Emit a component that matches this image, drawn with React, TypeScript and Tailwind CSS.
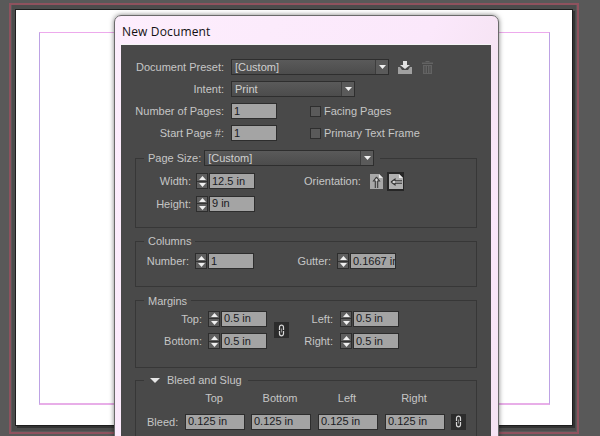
import React from 'react';

const Caret = ({ up }: { up?: boolean }) => (
  <svg width="7" height="4" viewBox="0 0 7 4" className={up ? 'rotate-180' : ''}>
    <path d="M0 0h7L3.5 4z" fill="#f0f0f0" />
  </svg>
);

const Select = ({ value, className }: { value: string; className: string }) => (
  <div className={`flex h-4 items-center border border-[#2e2e2e] bg-linear-to-b from-[#5a5a5a] to-[#4c4c4c] text-[#d0d0d0] ${className}`}>
    <span className="flex-1 pl-[3px] leading-none">{value}</span>
    <span className="flex h-full w-[13px] items-center justify-center border-l border-[#3d3d3d] bg-[#5a5a5a]">
      <Caret />
    </span>
  </div>
);

const Field = ({ value, className = 'w-[46px]' }: { value?: string; className?: string }) => (
  <div className={`flex h-4 items-center overflow-hidden whitespace-nowrap border border-[#2d2d2d] bg-[#a4a4a4] pl-[2px] leading-none text-[#1a1a22] ${className}`}>
    {value}
  </div>
);

const Stepper = () => (
  <div className="flex h-4 w-[12px] flex-col border border-[#2d2d2d] bg-[#5f5f5f]">
    <span className="flex flex-1 items-center justify-center border-b border-[#333]">
      <Caret up />
    </span>
    <span className="flex flex-1 items-center justify-center">
      <Caret />
    </span>
  </div>
);

const SpinField = ({ value, className }: { value: string; className?: string }) => (
  <div className="flex items-center gap-px">
    <Stepper />
    <Field value={value} className={className} />
  </div>
);

const Check = ({ label }: { label: string }) => (
  <div className="flex items-center gap-[3px]">
    <span className="h-[11px] w-[11px] border border-[#2e2e2e] bg-[#5a5a5a]" />
    <span>{label}</span>
  </div>
);

const LinkIcon = () => (
  <div className="flex h-4 w-[15px] items-center justify-center bg-[#2c2c2c]">
    <svg width="9" height="13" viewBox="0 0 9 13" fill="none" stroke="#d8d8d8" strokeWidth="1.2">
      <path d="M2.5 6V3.2a2 2 0 0 1 4 0V6" />
      <path d="M2.5 7v2.8a2 2 0 0 0 4 0V7" />
      <path d="M4.5 4.5v4" stroke="#8a8a8a" />
    </svg>
  </div>
);

const PortraitIcon = () => (
  <svg width="15" height="17" viewBox="0 0 15 17">
    <path d="M1 1h9l4 4v11H1z" fill="#a8a8a8" />
    <path d="M10 1l4 4h-4z" fill="#e8e8e8" />
    <path d="M7.5 4L4.5 8h1.8v7M7.5 4l3 4H8.700v7" fill="none" stroke="#3a3a3a" strokeWidth="1.1" />
    <circle cx="7.500" cy="7" r="1" fill="#e0e0e0" />
  </svg>
);

const LandscapeIcon = () => (
  <div className="flex h-[19px] w-[17px] items-center justify-center bg-[#262626]">
    <svg width="14" height="15" viewBox="0 0 14 15">
      <path d="M0 0h10l4 4v11H0z" fill="#b0b0b0" />
      <path d="M10 0l4 4h-4z" fill="#eeeeee" />
      <path d="M2 8l4-3v1.800h7M2 8l4 3V9.200h7" fill="none" stroke="#303030" strokeWidth="1.1" />
      <circle cx="5" cy="8" r="1" fill="#e0e0e0" />
    </svg>
  </div>
);

export default function App() {
  return (
    <div className="relative h-[436px] w-[600px] overflow-hidden bg-[#595959] font-['Liberation_Sans',sans-serif] text-[11px] text-[#c6c6c6]">
      {/* bleed line, page and margin guides */}
      <div className="absolute left-[12px] top-[5px] h-[426px] w-[564px] bg-[#4c4c4c]" />
      <div className="absolute left-[9px] top-[3px] h-[431px] w-[570px] border-2 border-[#8f525e]" />
      <div className="absolute left-[15px] top-[9px] h-[417px] w-[558px] border border-[#1e1e1e] bg-white shadow-[2px_2px_0_#333]" />
      <div className="absolute left-[39px] top-[32px] h-[373px] w-[511px] border-x border-x-[#bda2e4] border-b-2 border-t border-b-[#e8aee8] border-t-[#edaaec]" />

      {/* dialog */}
      <div className="absolute left-[114px] top-[15px] h-[440px] w-[385px] rounded-t-[7px] border border-[#6a6a6a] bg-[linear-gradient(115deg,#fdeefd_0%,#fbe8fb_55%,#f6e4f4_68%,#fbe7fb_80%,#f5e3f3_100%)] shadow-[0_0_5px_rgba(0,0,0,0.5)]">
        <div className="h-[28px] pl-[7px] pt-[6px] font-['Open_Sans',sans-serif] text-[12px] leading-[20px] tracking-[0.15px] text-[#111]">New Document</div>

        <div className="ml-[6px] h-[420px] w-[370px] border-t border-[#f5f5f5] bg-[#494949] pl-[14px] pt-[14px]">
          {/* preset rows */}
          <div className="flex flex-col gap-[6px] whitespace-nowrap">
            <div className="flex h-4 items-center">
              <span className="w-[89px] text-right">Document Preset:</span>
              <Select value="[Custom]" className="ml-[7px] w-[158px]" />
              <svg width="16" height="13" viewBox="0 0 16 13" className="ml-[8px]">
                <path d="M6 0h4v4h3l-5 4-5-4h3z" fill="#e0e0e0" />
                <path d="M1 6h2l2 3h6l2-3h2v7H1z" fill="#a0a0a0" />
              </svg>
              <svg width="11" height="13" viewBox="0 0 11 13" className="ml-[9px]" fill="#636363">
                <path d="M0 1.500h11v1.500H0zM3.500 0h4v1h-4zM1 4h9v9H1z" />
                <path d="M3 5v7M5.500 5v7M8 5v7" stroke="#494949" />
              </svg>
            </div>
            <div className="flex h-4 items-center">
              <span className="w-[89px] text-right">Intent:</span>
              <Select value="Print" className="ml-[7px] w-[124px]" />
            </div>
            <div className="flex h-4 items-center">
              <span className="w-[89px] text-right">Number of Pages:</span>
              <Field value="1" className="ml-[7px] w-[46px]" />
              <div className="ml-[33px]"><Check label="Facing Pages" /></div>
            </div>
            <div className="flex h-4 items-center">
              <span className="w-[89px] text-right">Start Page #:</span>
              <Field value="1" className="ml-[7px] w-[46px]" />
              <div className="ml-[33px]"><Check label="Primary Text Frame" /></div>
            </div>
          </div>

          {/* page size */}
          <fieldset className="mt-[9px] w-[342px] border border-[#373737] pb-[15px] pt-[7px]">
            <legend className="ml-[8px] flex h-4 items-center pl-[4px] pr-[6px]">
              <span>Page Size:</span>
              <Select value="[Custom]" className="ml-[3px] w-[170px]" />
            </legend>
            <div className="flex">
              <div className="flex flex-col gap-[6px]">
                <div className="flex items-center">
                  <span className="w-[55px] text-right">Width:</span>
                  <div className="ml-[5px]"><SpinField value="12.5 in" /></div>
                </div>
                <div className="flex items-center">
                  <span className="w-[55px] text-right">Height:</span>
                  <div className="ml-[5px]"><SpinField value="9 in" /></div>
                </div>
              </div>
              <div className="ml-[49px] flex h-[17px] items-center">
                <span className="w-[65px]">Orientation:</span>
                <PortraitIcon />
                <div className="ml-[3px]"><LandscapeIcon /></div>
              </div>
            </div>
          </fieldset>

          {/* columns */}
          <fieldset className="mt-[5px] w-[342px] border border-[#373737] pb-[16px] pt-[4px]">
            <legend className="ml-[8px] h-4 px-[4px] leading-4">Columns</legend>
            <div className="flex items-center">
              <span className="w-[53px] text-right">Number:</span>
              <div className="ml-[6px]"><SpinField value="1" /></div>
              <span className="ml-[43px] w-[34px] text-right">Gutter:</span>
              <div className="ml-[6px]"><SpinField value="0.1667 in" /></div>
            </div>
          </fieldset>

          {/* margins */}
          <fieldset className="mt-[6px] w-[342px] border border-[#373737] pb-[17px] pt-[2px]">
            <legend className="ml-[8px] h-4 px-[4px] leading-4">Margins</legend>
            <div className="flex items-center">
              <div className="flex flex-col gap-[6px]">
                <div className="flex items-center">
                  <span className="w-[66px] text-right">Top:</span>
                  <div className="ml-[6px]"><SpinField value="0.5 in" /></div>
                </div>
                <div className="flex items-center">
                  <span className="w-[66px] text-right">Bottom:</span>
                  <div className="ml-[6px]"><SpinField value="0.5 in" /></div>
                </div>
              </div>
              <div className="ml-[7px]"><LinkIcon /></div>
              <div className="ml-[2px] flex flex-col gap-[6px]">
                <div className="flex items-center">
                  <span className="w-[42px] text-right">Left:</span>
                  <div className="ml-[7px]"><SpinField value="0.5 in" /></div>
                </div>
                <div className="flex items-center">
                  <span className="w-[42px] text-right">Right:</span>
                  <div className="ml-[7px]"><SpinField value="0.5 in" /></div>
                </div>
              </div>
            </div>
          </fieldset>

          {/* bleed and slug */}
          <fieldset className="mt-[5px] w-[342px] border border-[#373737] pt-px">
            <legend className="ml-[8px] flex h-4 items-center gap-[7px] px-[6px]">
              <svg width="10" height="5" viewBox="0 0 10 5"><path d="M0 0h10L5 5z" fill="#e6e6e6" /></svg>
              <span>Bleed and Slug</span>
            </legend>
            <div className="flex h-4 pl-[48px] text-center">
              <span className="w-[60px]">Top</span>
              <span className="ml-[6px] w-[60px]">Bottom</span>
              <span className="ml-[7px] w-[60px]">Left</span>
              <span className="ml-[7px] w-[60px]">Right</span>
            </div>
            <div className="mt-[8px] flex items-center">
              <span className="w-[42px] pl-[11px]">Bleed:</span>
              <div className="ml-[7px] flex gap-[6px]">
                <Field value="0.125 in" className="w-[60px]" />
                <Field value="0.125 in" className="w-[60px]" />
                <Field value="0.125 in" className="ml-px w-[60px]" />
                <Field value="0.125 in" className="ml-px w-[60px]" />
              </div>
              <div className="ml-[6px]"><LinkIcon /></div>
            </div>
            {/* second row is cut by the window edge, only the box tops show */}
            <div className="mt-[6px] flex items-center">
              <span className="w-[42px]" />
              <div className="ml-[7px] flex gap-[6px]">
                <Field className="w-[60px]" />
                <Field className="w-[60px]" />
                <Field className="ml-px w-[60px]" />
                <Field className="ml-px w-[60px]" />
              </div>
            </div>
          </fieldset>
        </div>
      </div>
    </div>
  );
}
